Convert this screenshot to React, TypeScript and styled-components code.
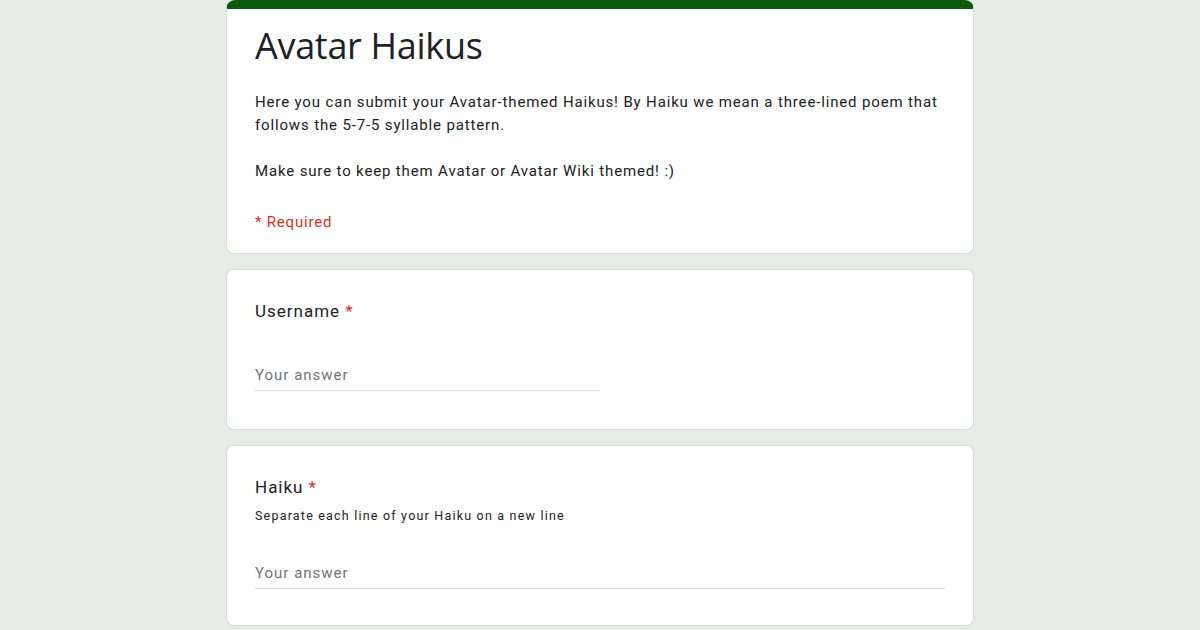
import React from "react";
import styled, { createGlobalStyle } from "styled-components";

const Global = createGlobalStyle`
  html, body { margin: 0; padding: 0; }
  body {
    background: #e4ede4;
    font-family: Roboto, "Open Sans", Arial, sans-serif;
    color: #202124;
  }
`;

const Page = styled.div`
  width: 748px;
  margin: 0 auto;
  display: flex;
  flex-direction: column;
  gap: 15px;
`;

const Card = styled.div`
  background: #fff;
  border: 1px solid #dadce0;
  border-radius: 8px;
  padding: 0 28px;
  overflow: hidden;
`;

const HeaderCard = styled(Card)`
  border-top: 9px solid #0b5a0b;
  border-radius: 9px 9px 8px 8px;
  padding-top: 13px;
  padding-bottom: 19px;
`;

const Title = styled.h1`
  margin: 0;
  font-family: "Open Sans", Roboto, sans-serif;
  font-weight: 400;
  font-size: 36px;
  line-height: 48px;
  letter-spacing: -0.3px;
  color: #202124;
`;

const Desc = styled.div`
  margin-top: 21px;
  font-size: 15px;
  line-height: 23px;
  letter-spacing: 0.85px;
  white-space: pre-wrap;
`;

const Required = styled.div`
  margin-top: 27px;
  font-size: 15px;
  line-height: 24px;
  letter-spacing: 0.8px;
  color: #d93025;
`;

const QuestionCard = styled(Card)<{ $pb: number }>`
  padding-top: 29px;
  padding-bottom: ${(p) => p.$pb}px;
`;

const Label = styled.div`
  font-size: 17px;
  line-height: 24px;
  letter-spacing: 1px;
  color: #202124;
`;

const Star = styled.span`
  color: #d93025;
  margin-left: 5px;
`;

const Help = styled.div`
  font-size: 12.5px;
  line-height: 18px;
  letter-spacing: 1.2px;
  color: #202124;
  margin-top: 8px;
`;

const Answer = styled.div<{ $full: boolean; $mt: number }>`
  margin-top: ${(p) => p.$mt}px;
  width: ${(p) => (p.$full ? "100%" : "345px")};
  border-bottom: 1px solid #dadce0;
  font-size: 15px;
  line-height: 24px;
  padding-bottom: 3px;
  letter-spacing: 1px;
  color: #70757a;
`;

export default function App() {
  return (
    <>
      <Global />
      <Page>
        <HeaderCard>
          <Title>Avatar Haikus</Title>
          <Desc>
            {"Here you can submit your Avatar-themed Haikus! By Haiku we mean a three-lined poem that\nfollows the 5-7-5 syllable pattern.\n\nMake sure to keep them Avatar or Avatar Wiki themed! :)"}
          </Desc>
          <Required>* Required</Required>
        </HeaderCard>
        <QuestionCard $pb={38}>
          <Label>
            Username<Star>*</Star>
          </Label>
          <Answer $full={false} $mt={40}>Your answer</Answer>
        </QuestionCard>
        <QuestionCard $pb={36}>
          <Label>
            Haiku<Star>*</Star>
          </Label>
          <Help>Separate each line of your Haiku on a new line</Help>
          <Answer $full={true} $mt={36}>Your answer</Answer>
        </QuestionCard>
      </Page>
    </>
  );
}
